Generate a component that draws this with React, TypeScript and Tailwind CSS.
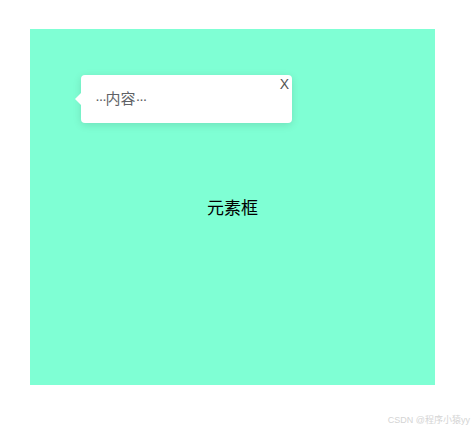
export default function App() {
  return (
    <div className="flex h-[430px] w-[474px] flex-col bg-white font-['Liberation_Sans','Noto_Sans_CJK_SC',sans-serif]">
      <div className="pl-[30px] pt-[29px]">
        <div className="relative flex h-[356px] w-[405px] items-center justify-center bg-[#7fffd4] text-[17px] text-black">
          <span className="pt-[3px]">元素框</span>
          {/* tooltip */}
          <div className="absolute left-[51px] top-[46px] h-[48px] w-[211px] rounded-[4px] bg-white shadow-[0_2px_8px_rgba(0,0,0,0.12)]">
            <span className="absolute left-[-6px] top-[18px] h-0 w-0 border-y-[6px] border-r-[6px] border-y-transparent border-r-white" />
            <span className="absolute right-[3px] top-[0px] text-[14px] leading-[18px] text-[#555]">X</span>
            <div className="pl-[14px] pt-[14px] text-[15px] leading-[20px] text-[#606266]">
              <span className="tracking-[-1.5px]">···</span>内容<span className="tracking-[-1.5px]">···</span>
            </div>
          </div>
        </div>
      </div>
      <div className="mt-auto flex justify-end pb-[4px] pr-[4px] text-[9px] leading-[12px] text-[#d4d4d4]">CSDN @程序小猿yy</div>
    </div>
  )
}
